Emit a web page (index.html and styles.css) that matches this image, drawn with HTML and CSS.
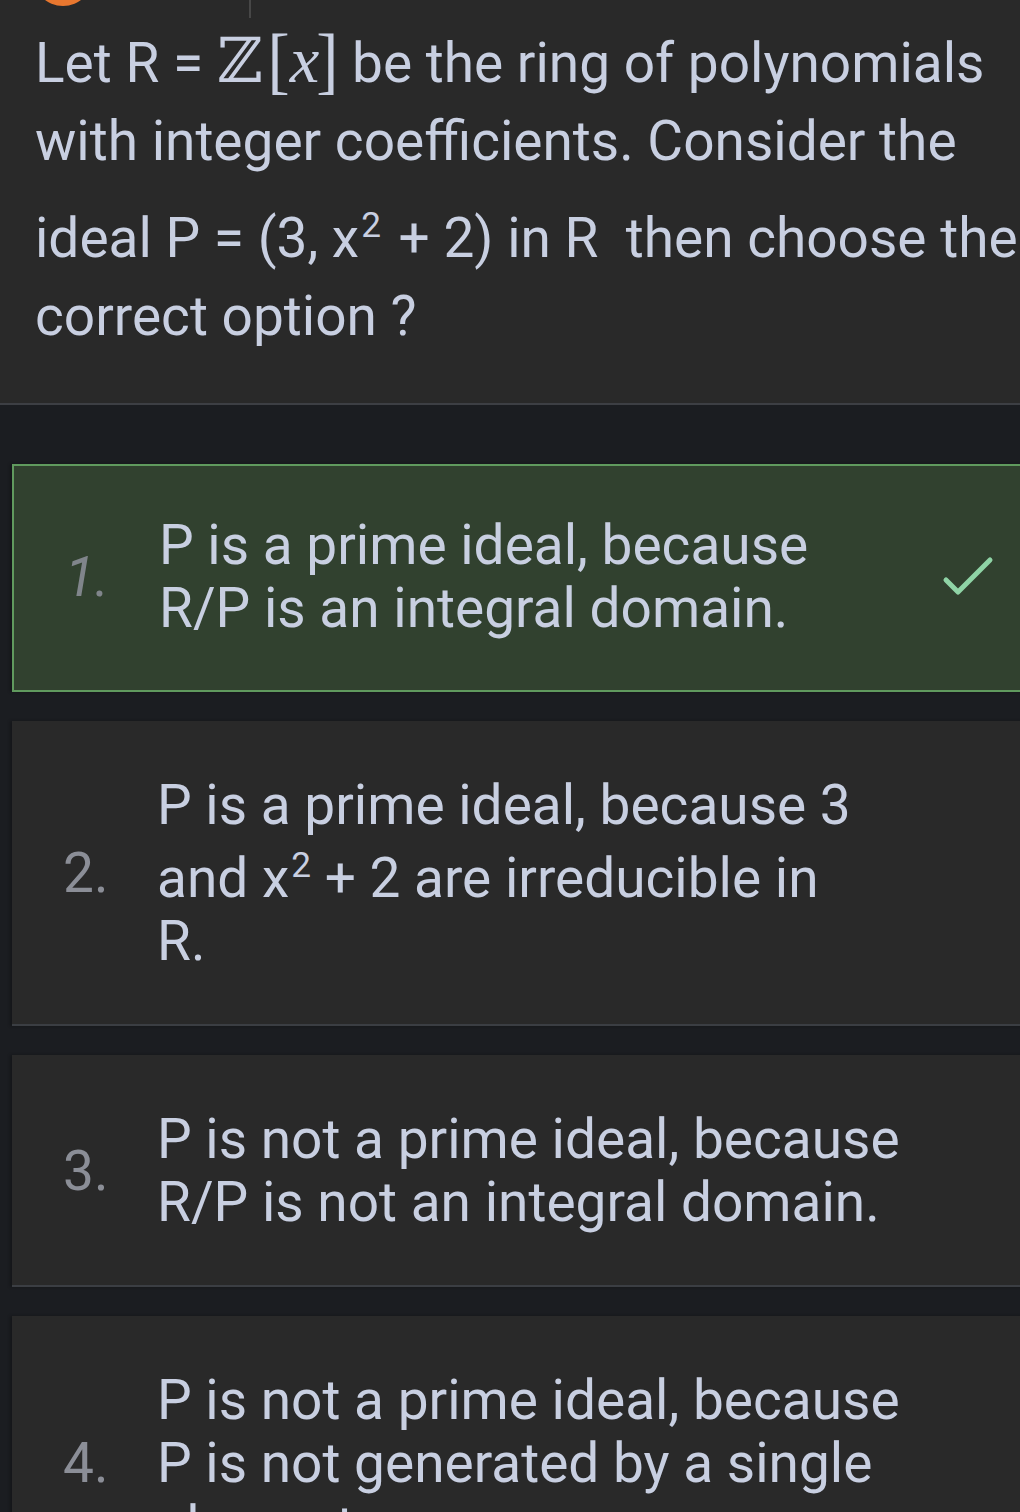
FILE: index.html
```html
<!DOCTYPE html>
<html lang="en">
<head>
  <meta charset="UTF-8" />
  <title>Question</title>
  <meta name="viewport" content="width=device-width, initial-scale=1.0" />
  <link rel="stylesheet" href="styles.css">
</head>
<body>
  <div class="topbar">
    <div class="avatar"></div>
    <div class="sep"></div>
  </div>

  <div class="question">
    Let R = <span class="math"><span class="bb">ℤ</span><span class="br">[</span><i>x</i><span class="br">]</span></span> be the ring of polynomials<br>
    with integer coefficients. Consider the<br>
    ideal P = (3, x<sup>2</sup> + 2) in R &nbsp;then choose the<br>
    correct option ?
  </div>

  <div class="options">
    <div class="option correct">
      <div class="num italic">1.</div>
      <div class="text">P is a prime ideal, because<br>R/P is an integral domain.</div>
      <svg class="check" width="52" height="42" viewBox="0 0 52 42">
        <path d="M4 24 L16 36 L48 4" fill="none" stroke="#8fd4a6" stroke-width="5" stroke-linecap="round" stroke-linejoin="round" />
      </svg>
    </div>

    <div class="option">
      <div class="num">2.</div>
      <div class="text">P is a prime ideal, because 3<br>and x<sup>2</sup> + 2 are irreducible in<br>R.</div>
    </div>

    <div class="option">
      <div class="num">3.</div>
      <div class="text">P is not a prime ideal, because<br>R/P is not an integral domain.</div>
    </div>

    <div class="option">
      <div class="num">4.</div>
      <div class="text">P is not a prime ideal, because<br>P is not generated by a single<br>element.</div>
    </div>
  </div>
</body>
</html>
```

FILE: styles.css
```css
html, body {
  overflow: hidden;
}

body {
  margin: 0;
  background: #1b1d21;
  font-family: Roboto, "Noto Sans", Arial, sans-serif;
  color: #c8cfe1;
  font-size: 55px;
}

.topbar {
  height: 18px;
  overflow: hidden;
  display: flex;
  align-items: flex-end;
  padding-left: 33px;
  background: #292929;
}

.avatar {
  width: 60px;
  height: 60px;
  border-radius: 50%;
  background: #e8772f;
  margin-bottom: 12px;
  flex-shrink: 0;
}

.sep {
  width: 2px;
  height: 18px;
  background: #474747;
  margin-left: 156px;
}

.question {
  background: #292929;
  padding: 6px 0 48px 35px;
  line-height: 78px;
  white-space: nowrap;
  border-bottom: 2px solid #3d3f44;
}

.math {
  font-family: "Liberation Serif", "DejaVu Serif", serif;
  font-size: 1.21em;
  line-height: 1;
}

.math .bb {
  font-family: "DejaVu Serif", serif;
  font-size: 0.94em;
  margin-right: 5px;
}

.math .br {
  display: inline-block;
  transform: scaleY(1.12);
}

.math i {
  font-style: italic;
  margin-right: -3px;
}

sup {
  font-size: 0.64em;
  vertical-align: 20px;
  margin-left: 2px;
}

.question sup {
  line-height: 90px;
  margin-right: 4px;
}

.option sup {
  line-height: 56px;
}

.options {
  padding: 59px 0 0 12px;
  margin-right: -32px;
  display: flex;
  flex-direction: column;
  gap: 29px;
}

.option {
  display: flex;
  align-items: center;
  background: #292929;
  padding: 53px 0 51px;
  border-bottom: 2px solid #3b3e43;
  box-shadow: -2px 0 3px rgba(0, 0, 0, 0.25);
  line-height: 63px;
  white-space: nowrap;
}

.option.correct {
  background: #31412f;
  border: 2px solid #609a5e;
  padding: 48px 0 50px;
}

.num {
  width: 94px;
  padding-left: 51px;
  flex-shrink: 0;
  color: #8b8e97;
}

.option.correct .num {
  color: #80858b;
}

.num.italic {
  font-style: italic;
}

.text {
  flex: 1;
}

.check {
  margin-right: 56px;
  flex-shrink: 0;
}
```
